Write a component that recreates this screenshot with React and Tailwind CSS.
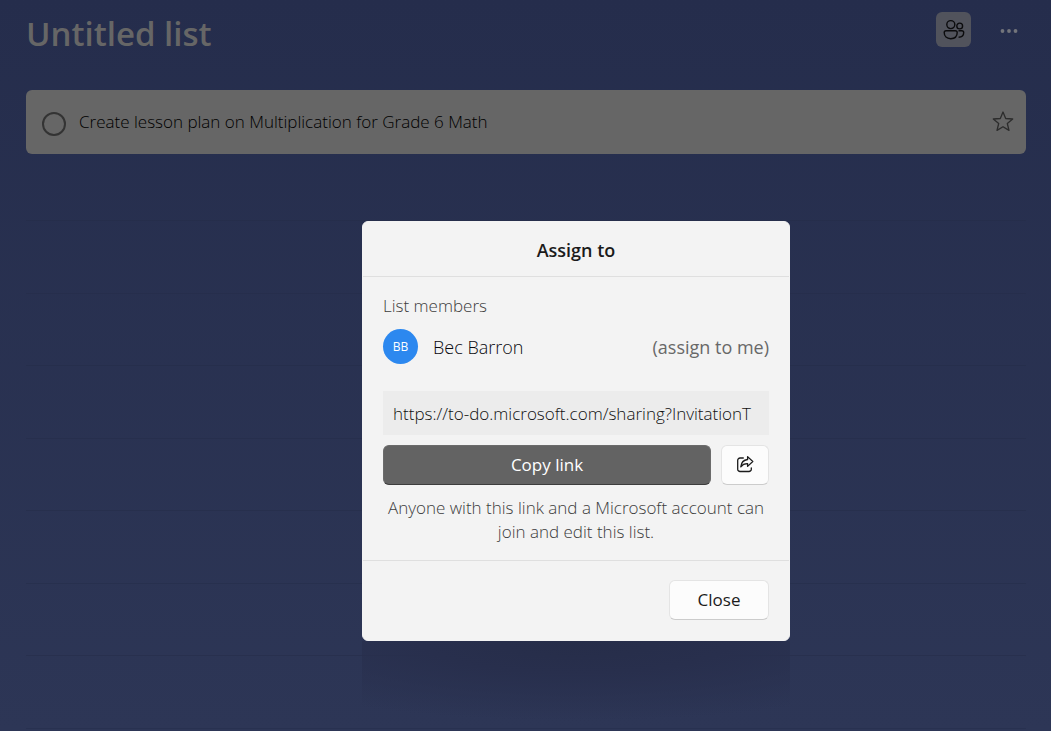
const emptyRows = [1, 2, 3, 4, 5, 6, 7];

function PeopleIcon() {
  return (
    <svg className="h-6 w-6" viewBox="0 0 24 24" fill="none" stroke="currentColor" strokeWidth="1.4" aria-hidden="true">
      <circle cx="8.8" cy="6.6" r="4" />
      <circle cx="17.7" cy="8" r="2.9" />
      <path d="M4.1 12.7h9.2c1.1 0 1.9.8 1.9 1.9 0 3.8-2.6 6.1-6.5 6.1s-6.5-2.3-6.5-6.1c0-1.1.8-1.9 1.9-1.9z" />
      <path d="M16.5 12.7h3.3c1.1 0 1.9.8 1.9 1.9 0 2.9-1.9 4.6-5.1 4.6" />
    </svg>
  );
}

function MoreIcon() {
  return (
    <svg className="h-5 w-5" viewBox="0 0 20 20" fill="currentColor" aria-hidden="true">
      <circle cx="3.5" cy="11" r="1.9" />
      <circle cx="10" cy="11" r="1.9" />
      <circle cx="16.5" cy="11" r="1.9" />
    </svg>
  );
}

function StarIcon() {
  return (
    <svg className="h-6 w-6" viewBox="0 0 24 24" fill="none" stroke="currentColor" strokeWidth="1.3" strokeLinejoin="round" aria-hidden="true">
      <path d="M12 2l2.7 6.5 7 .5-5.4 4.5 1.7 6.9L12 16.7l-6 3.7 1.7-6.9L2.3 9l7-.5z" />
    </svg>
  );
}

function ShareIcon() {
  return (
    <svg className="h-5 w-5" viewBox="0 0 20 20" fill="none" stroke="currentColor" strokeWidth="1.3" strokeLinejoin="round" strokeLinecap="round" aria-hidden="true">
      <path d="M8.3 3H5A2.3 2.3 0 0 0 2.7 5.3v8.9A2.3 2.3 0 0 0 5 16.5h9a2.3 2.3 0 0 0 2.3-2.3v-1.2" />
      <path d="M12.6 1.6l5.2 4.9-5.2 4.9V8.7c-3-.1-5 .8-6.8 3.2.4-4 2.7-7 6.8-7.4z" />
    </svg>
  );
}

export default function App() {
  return (
    <div className="relative flex min-h-screen flex-col overflow-hidden bg-linear-to-b from-[#252d4c] to-[#2d3656] font-['Open_Sans','Noto_Sans',sans-serif] text-[17px] leading-6 font-light">
      <header className="flex items-start justify-between px-6 pt-3">
        <h1 className="px-0.5 text-[33px] leading-11 font-semibold text-[#666666]">Untitled list</h1>
        <div className="flex items-center gap-5">
          <button type="button" aria-label="Share list" className="flex h-[35px] w-[35px] items-center justify-center rounded-md bg-[#51535c] text-[#0b0b0d]">
            <PeopleIcon />
          </button>
          <button type="button" aria-label="More options" className="flex w-9 items-center justify-center text-[#73757b]">
            <MoreIcon />
          </button>
        </div>
      </header>

      <main className="flex grow flex-col pt-[34px] pr-[25px] pl-[26px]">
        <div className="flex h-16 items-center rounded-md bg-[#666666] pr-[11px] pl-4">
          <label className="flex items-center gap-[13px] pt-1 text-black">
            <input type="checkbox" className="h-6 w-6 appearance-none rounded-full border-2 border-[#333333]" />
            <span className="pb-1">Create lesson plan on Multiplication for Grade 6 Math</span>
          </label>
          <button type="button" aria-label="Mark as important" className="ml-auto text-[#2c2c2c]">
            <StarIcon />
          </button>
        </div>
        <div className="mt-[66px] flex grow flex-col border-b border-[#283150]">
          {emptyRows.map((row) => (
            <div key={row} className="grow border-t border-[#232c48]/50" />
          ))}
        </div>
        <div className="h-0.5" />
      </main>

      <div className="absolute inset-0 flex items-center justify-center pt-[131px] pl-[101px]">
        <div className="relative w-[428px]">
          <div className="absolute inset-x-0 top-full h-20 bg-[radial-gradient(ellipse_90%_100%_at_50%_0%,#262d49_0%,#282f4d_40%,transparent_100%)]" />
          <section role="dialog" aria-labelledby="assign-title" className="relative rounded-md border border-[#f3f3f3] bg-[#f3f3f3]">
            <h2 id="assign-title" className="border-b border-[#dfdfdf] pt-4 pb-[14px] text-center text-lg leading-6 font-semibold text-[#1b1b1b]">
              Assign to
            </h2>
            <div className="px-5 pt-[17px] pb-4">
              <p className="text-[#3c3c3c]">List members</p>
              <div className="mt-[11px] flex items-center">
                <span className="flex h-[35px] w-[35px] items-center justify-center rounded-full bg-[#2c88ef] text-xs font-normal text-white">BB</span>
                <span className="ml-[15px] text-lg text-[#08090f]">Bec Barron</span>
                <button type="button" className="ml-auto text-lg font-normal text-[#686868]">(assign to me)</button>
              </div>
              <input
                type="text"
                readOnly
                aria-label="Invitation link"
                defaultValue="https://to-do.microsoft.com/sharing?InvitationT"
                className="mt-[27px] block h-11 w-full bg-[#ececec] px-2.5 text-[#101010]"
              />
              <div className="mt-2.5 flex gap-2.5">
                <button type="button" className="h-10 grow rounded-md border border-[#6b6b6b] border-b-[#3d3d3d] bg-[#636363] font-normal text-white">
                  Copy link
                </button>
                <button type="button" aria-label="Share link" className="flex h-10 w-12 items-center justify-center rounded-md border border-[#e4e4e4] border-b-[#cccccc] bg-[#fcfcfc] text-[#1b1b1b]">
                  <ShareIcon />
                </button>
              </div>
              <p className="mt-[11px] text-center text-[#3c3c3c]">
                Anyone with this link and a Microsoft account can join and edit this list.
              </p>
            </div>
            <footer className="flex justify-end border-t border-[#dfdfdf] px-5 pt-[19px] pb-5">
              <button type="button" className="h-10 w-[100px] rounded-md border border-[#e4e4e4] border-b-[#cccccc] bg-[#fcfcfc] font-normal text-[#1b1b1b]">
                Close
              </button>
            </footer>
          </section>
        </div>
      </div>
    </div>
  );
}
